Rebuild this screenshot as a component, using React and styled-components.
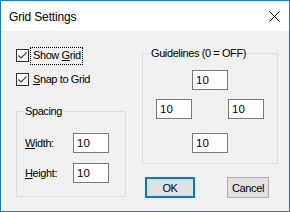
import styled, { createGlobalStyle } from "styled-components";

// Global reset

const GlobalStyle = createGlobalStyle`
  html, body {
    margin: 0;
    padding: 0;
    background: #f0f0f0;
  }
  * {
    box-sizing: border-box;
  }
`;

// Dialog frame

const Window = styled.div`
  width: 290px;
  height: 212px;
  border: 1px solid #1979d1;
  display: flex;
  flex-direction: column;
  background: #f0f0f0;
  font-family: "Liberation Sans", Arial, sans-serif;
  font-size: 11px;
  letter-spacing: -0.4px;
  color: #000;
`;

const TitleBar = styled.div`
  height: 30px;
  flex: none;
  background: #fff;
  display: flex;
  align-items: center;
  justify-content: space-between;
  padding: 0 9px 0 8px;
`;

const Title = styled.span`
  font-size: 12px;
  letter-spacing: -0.15px;
  padding-top: 1px;
`;

const Body = styled.div`
  flex: 1;
  display: flex;
  gap: 16px;
  padding-left: 15px;
`;

const LeftColumn = styled.div`
  width: 110px;
  display: flex;
  flex-direction: column;
  padding-top: 16px;
`;

const RightColumn = styled.div`
  width: 136px;
  display: flex;
  flex-direction: column;
  padding-top: 22px;
`;

// Checkboxes

const CheckRow = styled.label`
  height: 17px;
  display: flex;
  align-items: center;
  gap: 2px;
  margin-bottom: ${({ $gap }) => $gap}px;
`;

const Box = styled.span`
  width: 13px;
  height: 13px;
  border: 1px solid #333;
  background: #fff;
  display: flex;
  align-items: center;
  justify-content: center;
`;

const CheckText = styled.span`
  padding: 1px 1px 2px 2px;
  line-height: 13px;
  outline: ${({ $focused }) => ($focused ? "1px dotted #000" : "none")};
`;

const Key = styled.u`
  text-decoration: underline;
`;

// Group boxes

const Group = styled.div`
  position: relative;
  border: 1px solid #dcdcdc;
  padding: ${({ $pad }) => $pad};
`;

const Legend = styled.span`
  position: absolute;
  top: -7px;
  left: 7px;
  padding: 0 1px;
  line-height: 13px;
  background: #f0f0f0;
`;

const FieldGrid = styled.div`
  display: grid;
  grid-template-columns: 48px 36px;
  grid-auto-rows: 20px;
  row-gap: 10px;
  align-items: center;
`;

const GuideGrid = styled.div`
  display: grid;
  grid-template-columns: repeat(3, 36px);
  grid-template-rows: 20px 9px 20px 14px 20px;
  justify-content: center;
`;

const Input = styled.div`
  width: 36px;
  height: 20px;
  border: 1px solid #7a7a7a;
  background: #fff;
  padding-left: 3px;
  line-height: 18px;
  font-size: 11.5px;
  letter-spacing: 0;
  grid-column: ${({ $col }) => $col || "auto"};
  grid-row: ${({ $row }) => $row || "auto"};
`;

// Buttons

const ButtonRow = styled.div`
  display: flex;
  gap: 32px;
  margin-top: 13px;
  padding-left: 3px;
`;

const Button = styled.div`
  width: ${({ $w }) => $w}px;
  height: 21px;
  display: flex;
  align-items: center;
  justify-content: center;
  background: #e1e1e1;
  border: ${({ $default }) =>
    $default ? "2px solid #0078d7" : "1px solid #adadad"};
`;

function Check({ children, focused, gap }) {
  return (
    <CheckRow $gap={gap}>
      <Box>
        <svg width="11" height="11" viewBox="0 0 11 11">
          <polyline
            points="1.5,5.5 4,8 9.5,2.5"
            fill="none"
            stroke="#444"
            strokeWidth="1.2"
          />
        </svg>
      </Box>
      <CheckText $focused={focused}>{children}</CheckText>
    </CheckRow>
  );
}

export default function App() {
  return (
    <>
      <GlobalStyle />
      <Window>
        <TitleBar>
          <Title>Grid Settings</Title>
          <svg width="11" height="11" viewBox="0 0 11 11">
            <path d="M0.5 0.5 L10.5 10.5 M10.5 0.5 L0.5 10.5" stroke="#000" strokeWidth="1" />
          </svg>
        </TitleBar>
        <Body>
          <LeftColumn>
            <Check focused gap={7}>
              Show <Key>G</Key>rid
            </Check>
            <Check gap={23}>
              <Key>S</Key>nap to Grid
            </Check>
            <Group $pad="21px 0 13px 8px">
              <Legend>Spacing</Legend>
              <FieldGrid>
                <span>
                  <Key>W</Key>idth:
                </span>
                <Input>10</Input>
                <span>
                  <Key>H</Key>eight:
                </span>
                <Input>10</Input>
              </FieldGrid>
            </Group>
          </LeftColumn>
          <RightColumn>
            <Group $pad="16px 0 10px 0">
              <Legend>Guidelines (0 = OFF)</Legend>
              <GuideGrid>
                <Input $col={2} $row={1}>10</Input>
                <Input $col={1} $row={3}>10</Input>
                <Input $col={3} $row={3}>10</Input>
                <Input $col={2} $row={5}>10</Input>
              </GuideGrid>
            </Group>
            <ButtonRow>
              <Button $w={50} $default>OK</Button>
              <Button $w={42}>Cancel</Button>
            </ButtonRow>
          </RightColumn>
        </Body>
      </Window>
    </>
  );
}
